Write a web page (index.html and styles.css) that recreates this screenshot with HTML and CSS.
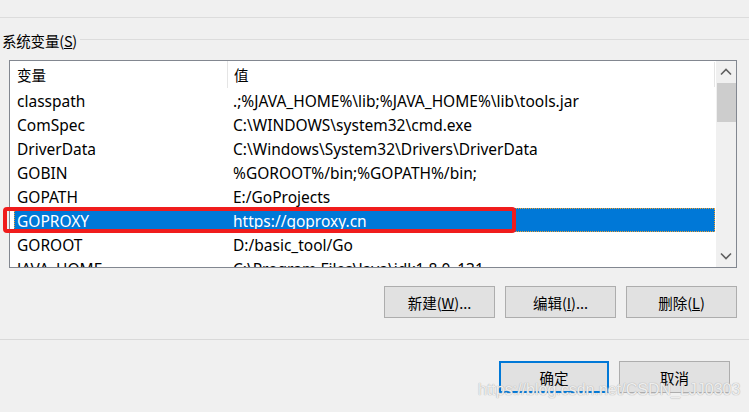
FILE: index.html
```html
<!DOCTYPE html>
<html lang="zh">
<head>
    <meta charset="UTF-8">
    <title>环境变量</title>
    <link rel="stylesheet" href="styles.css">
</head>
<body>
    <div class="dialog">
        <div class="top-strip"></div>

        <div class="group-title">
            <span>系统变量(<u>S</u>)</span>
            <div class="group-line"></div>
        </div>

        <div class="listbox">
            <div class="list-main">
                <div class="list-head">
                    <div class="cell c1">变量</div>
                    <div class="cell c2">值</div>
                </div>
                <div class="list-body">
                    <div class="row"><div class="cell c1">classpath</div><div class="cell c2">.;%JAVA_HOME%\lib;%JAVA_HOME%\lib\tools.jar</div></div>
                    <div class="row"><div class="cell c1">ComSpec</div><div class="cell c2">C:\WINDOWS\system32\cmd.exe</div></div>
                    <div class="row"><div class="cell c1">DriverData</div><div class="cell c2">C:\Windows\System32\Drivers\DriverData</div></div>
                    <div class="row"><div class="cell c1">GOBIN</div><div class="cell c2">%GOROOT%/bin;%GOPATH%/bin;</div></div>
                    <div class="row"><div class="cell c1">GOPATH</div><div class="cell c2">E:/GoProjects</div></div>
                    <div class="row selected"><div class="cell c1">GOPROXY</div><div class="cell c2">https://goproxy.cn</div></div>
                    <div class="row"><div class="cell c1">GOROOT</div><div class="cell c2">D:/basic_tool/Go</div></div>
                    <div class="row"><div class="cell c1">JAVA_HOME</div><div class="cell c2">C:\Program Files\Java\jdk1.8.0_131</div></div>
                </div>
            </div>
            <div class="scrollbar">
                <svg class="arrow" width="12" height="8" viewBox="0 0 12 8"><path d="M1 6.5 L6 1.5 L11 6.5" fill="none" stroke="#606060" stroke-width="1.6"/></svg>
                <div class="thumb"></div>
                <div class="track"></div>
                <svg class="arrow" width="12" height="8" viewBox="0 0 12 8"><path d="M1 1.5 L6 6.5 L11 1.5" fill="none" stroke="#606060" stroke-width="1.6"/></svg>
            </div>
        </div>

        <div class="actions">
            <button class="btn">新建(<u>W</u>)...</button>
            <button class="btn">编辑(<u>I</u>)...</button>
            <button class="btn">删除(<u>L</u>)</button>
        </div>

        <div class="separator"></div>

        <div class="footer-buttons">
            <button class="btn default">确定</button>
            <button class="btn">取消</button>
        </div>
    </div>

    <!-- 截图上的标注框和水印 -->
    <div class="mark"></div>
    <div class="watermark">https://blog.csdn.net/CSDN_LJJ0303</div>
</body>
</html>
```

FILE: styles.css
```css
html, body {
    margin: 0;
    padding: 0;
}
body {
    width: 749px;
    height: 412px;
    overflow: hidden;
    background: #f0f0f0;
    font-family: "Noto Sans", "Noto Sans CJK SC", sans-serif;
    font-size: 15.5px;
    color: #000;
    position: relative;
}
.dialog {
    display: flex;
    flex-direction: column;
}
.top-strip {
    height: 17px;
    border-bottom: 1px solid #dcdcdc;
}

/* 分组标题 */
.group-title {
    display: flex;
    align-items: center;
    height: 30px;
    margin-top: 8px;
    padding-left: 2px;
}
.group-title span {
    font-family: "Noto Sans CJK SC", sans-serif;
    font-size: 14.5px;
    line-height: 30px;
    letter-spacing: -0.2px;
}
.group-line {
    flex: 1;
    height: 1px;
    background: #dcdcdc;
    margin-left: 3px;
    margin-top: -3px;
}

/* 列表 */
.listbox {
    margin: 4px 12px 0 9px;
    height: 206px;
    border: 1px solid #828790;
    background: #fff;
    display: flex;
    overflow: hidden;
}
.list-main {
    flex: 1;
    overflow: hidden;
}
.list-head {
    display: flex;
    height: 27px;
    align-items: center;
    padding-left: 4px;
    position: relative;
}
.list-head::after {
    content: '';
    position: absolute;
    right: 0;
    top: 1px;
    width: 1px;
    height: 25px;
    background: #e5e5e5;
}
.list-head .cell {
    font-family: "Noto Sans CJK SC", sans-serif;
    font-size: 14.5px;
    height: 27px;
    line-height: 27px;
}
.list-head .c1 {
    border-right: 1px solid #e5e5e5;
}
.row {
    display: flex;
    height: 24px;
    line-height: 26px;
    margin-left: 4px;
    white-space: nowrap;
    overflow: hidden;
}
.cell.c1 {
    width: 210px;
    padding-left: 3px;
    flex-shrink: 0;
}
.cell.c2 {
    padding-left: 6px;
}
.row.selected {
    background: #0078d7;
    color: #fff;
    outline: 1px dotted #f0a030;
    outline-offset: -1px;
}

/* 滚动条 */
.scrollbar {
    width: 20px;
    margin-left: 1px;
    background: #f0f0f0;
    display: flex;
    flex-direction: column;
    align-items: center;
}
.scrollbar .arrow {
    height: 22px;
    padding: 7px 0;
    box-sizing: border-box;
}
.thumb {
    width: 19px;
    height: 39px;
    background: #cdcdcd;
}
.track {
    flex: 1;
}

/* 按钮 */
.btn {
    font-family: "Noto Sans CJK SC", sans-serif;
    font-size: 14.5px;
    width: 111px;
    height: 32px;
    background: #e1e1e1;
    border: 1px solid #adadad;
    padding: 0;
    color: #000;
}
.btn.default {
    border: 2px solid #0078d7;
    width: 110px;
}
.actions {
    display: flex;
    justify-content: flex-end;
    gap: 10px;
    margin-top: 18px;
    padding-right: 12px;
}
.separator {
    height: 1px;
    background: #d9d9d9;
    margin-top: 21px;
}
.footer-buttons {
    display: flex;
    justify-content: flex-end;
    gap: 10px;
    margin-top: 21px;
    padding-right: 19px;
}

/* 标注 */
.mark {
    position: absolute;
    left: 3px;
    top: 207px;
    width: 505px;
    height: 18px;
    border: 4px solid #f01c1c;
    border-radius: 4px;
}
.watermark {
    position: absolute;
    left: 478px;
    top: 381px;
    font-family: "Liberation Sans", Arial, sans-serif;
    font-size: 16px;
    color: rgba(255, 255, 255, 0.8);
    text-shadow: 0 0 1px #b0b0b0, 0 0 1px #b0b0b0;
    white-space: nowrap;
}
```
